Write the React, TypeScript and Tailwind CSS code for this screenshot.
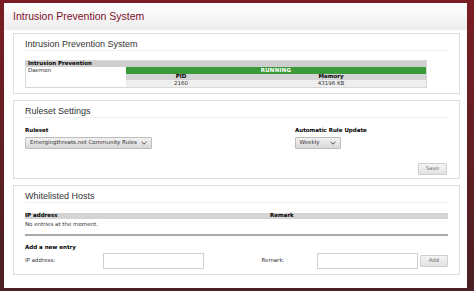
import React from 'react';

const Chevron = () => (
  <svg width="6" height="4" viewBox="0 0 6 4" className="ml-[4px]">
    <path d="M0.5 0.8 L3 3.2 L5.5 0.8" fill="none" stroke="#444" strokeWidth="0.9" />
  </svg>
);

const Box = ({ title, children, className = '' }: { title: string; children: React.ReactNode; className?: string }) => (
  <div className={`border border-[#dedede] bg-white px-[11px] ${className}`}>
    <div className="h-[17px] flex items-end pb-[1px] border-b border-[#f0f0f0] text-[9px] leading-none text-[#333] font-['Liberation_Sans',sans-serif]">
      {title}
    </div>
    {children}
  </div>
);

const App = () => {
  return (
    <div className="w-[474px] h-[291px] bg-gradient-to-b from-[#7a1d24] to-[#4a1f22] pl-[4px] pr-[7px] pt-[3px] pb-[3px] font-['DejaVu_Sans',sans-serif]">
      <div className="bg-white h-full flex flex-col">
        {/* Header */}
        <header className="h-[27px] bg-gradient-to-b from-white to-[#ededed] flex items-center pl-[9px]">
          <h1 className="text-[10.5px] leading-none text-[#7d1128] font-['Liberation_Sans',sans-serif]">
            Intrusion Prevention System
          </h1>
        </header>

        <div className="pl-[9px] pr-[7px] pt-[3px] flex flex-col gap-[6px]">
          {/* Status */}
          <Box title="Intrusion Prevention System" className="h-[61px]">
            <div className="mt-[9px] w-[402px] border border-[#d8d8d8] text-[5.5px] leading-none">
              <div className="h-[6px] bg-[#cfcfcf] font-bold text-black flex items-center pl-[2px]">Intrusion Prevention</div>
              <div className="flex">
                <div className="w-[100px] bg-white text-[#333] pl-[2px] pt-[1px]">Daemon</div>
                <div className="flex-1 flex flex-col">
                  <div className="h-[7px] bg-[#3a9a3a] text-white font-bold flex items-center justify-center tracking-[0.2px]">RUNNING</div>
                  <div className="h-[6px] bg-[#d4d4d4] font-bold text-black flex">
                    <div className="w-[110px] flex items-center justify-center">PID</div>
                    <div className="flex-1 flex items-center justify-center">Memory</div>
                  </div>
                  <div className="h-[7px] bg-[#efefef] text-[#333] flex">
                    <div className="w-[110px] flex items-center justify-center">2160</div>
                    <div className="flex-1 flex items-center justify-center">43196 KB</div>
                  </div>
                </div>
              </div>
            </div>
          </Box>

          {/* Ruleset Settings */}
          <Box title="Ruleset Settings" className="h-[79px]">
            <div className="flex text-[5.5px] leading-none mt-[10px]">
              <div className="w-[270px]">
                <div className="font-bold text-black">Ruleset</div>
                <div className="mt-[3px] h-[12px] w-[127px] rounded-[1px] border border-[#bdbdbd] bg-gradient-to-b from-[#f2f2f2] to-[#d9d9d9] flex items-center justify-center text-[#333]">
                  Emergingthreats.net Community Rules
                  <Chevron />
                </div>
              </div>
              <div>
                <div className="font-bold text-black">Automatic Rule Update</div>
                <div className="mt-[3px] h-[12px] w-[46px] rounded-[1px] border border-[#bdbdbd] bg-gradient-to-b from-[#f2f2f2] to-[#d9d9d9] flex items-center justify-center text-[#333]">
                  Weekly<span className="w-[7px]" />
                  <Chevron />
                </div>
              </div>
            </div>
            <div className="flex justify-end pr-[1px] mt-[14px]">
              <button className="h-[12px] w-[29px] rounded-[1px] border border-[#cfcfcf] bg-gradient-to-b from-[#f4f4f4] to-[#e2e2e2] text-[5.5px] leading-none text-[#777]">
                Save
              </button>
            </div>
          </Box>

          {/* Whitelisted Hosts */}
          <Box title="Whitelisted Hosts" className="h-[90px]">
            <div className="text-[5.5px] leading-none">
              <div className="mt-[10px] h-[6px] bg-[#d4d4d4] font-bold text-black flex items-center">
                <div className="w-[245px]">IP address</div>
                <div>Remark</div>
              </div>
              <div className="mt-[3px] text-[#333]">No entries at the moment.</div>
              <div className="mt-[6px] h-[2px] bg-[#a9a9a9]" />
              <div className="mt-[9px] font-bold text-black">Add a new entry</div>
              <div className="mt-[3px] flex items-center h-[16px]">
                <div className="w-[78px] text-[#333]">IP address:</div>
                <div className="w-[101px] h-[16px] border border-[#cfcfcf] bg-white" />
                <div className="w-[58px]" />
                <div className="w-[56px] text-[#333]">Remark:</div>
                <div className="w-[101px] h-[16px] border border-[#cfcfcf] bg-white" />
                <button className="ml-[2px] h-[12px] w-[28px] rounded-[1px] border border-[#cfcfcf] bg-gradient-to-b from-[#f4f4f4] to-[#e2e2e2] text-[5.5px] leading-none text-[#777]">
                  Add
                </button>
              </div>
            </div>
          </Box>
        </div>
      </div>
    </div>
  );
};

export default App;
